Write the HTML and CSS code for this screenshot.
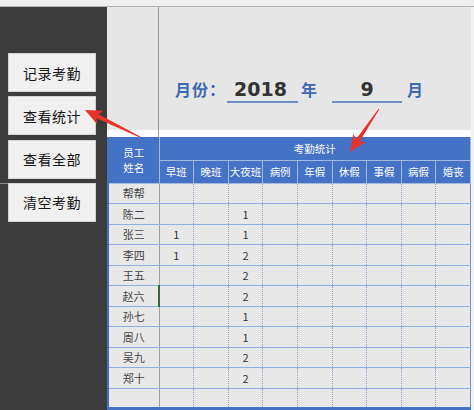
FILE: index.html
```html
<!DOCTYPE html>
<html lang="zh-CN">
<head>
<meta charset="utf-8">
<title>考勤统计</title>
<link rel="stylesheet" href="styles.css">
</head>
<body>
<div class="screen">
  <div class="topbar"></div>
  <div class="main">
    <aside class="panel">
      <button class="btn">记录考勤</button>
      <button class="btn">查看统计</button>
      <button class="btn">查看全部</button>
      <button class="btn">清空考勤</button>
      <span class="grid-line"></span>
    </aside>
    <section class="sheet">
      <div class="head">
        <div class="head-left"></div>
        <div class="head-right">
          <span class="label">月份：</span>
          <span class="field field-year">2018</span>
          <span class="label label-year">年</span>
          <span class="field field-month">9</span>
          <span class="label label-month">月</span>
        </div>
      </div>
      <table class="grid">
        <colgroup>
          <col class="col-name">
          <col><col><col><col><col><col><col><col><col>
        </colgroup>
        <thead>
          <tr class="hrow">
            <th rowspan="2" class="th-name">员工<br>姓名</th>
            <th colspan="9">考勤统计</th>
          </tr>
          <tr class="hrow">
            <th>早班</th><th>晚班</th><th>大夜班</th><th>病例</th><th>年假</th><th>休假</th><th>事假</th><th>病假</th><th>婚丧</th>
          </tr>
        </thead>
        <tbody>
          <tr><td class="name">帮帮</td><td></td><td></td><td></td><td></td><td></td><td></td><td></td><td></td><td></td></tr>
          <tr><td class="name">陈二</td><td></td><td></td><td>1</td><td></td><td></td><td></td><td></td><td></td><td></td></tr>
          <tr><td class="name">张三</td><td>1</td><td></td><td>1</td><td></td><td></td><td></td><td></td><td></td><td></td></tr>
          <tr><td class="name">李四</td><td>1</td><td></td><td>2</td><td></td><td></td><td></td><td></td><td></td><td></td></tr>
          <tr><td class="name">王五</td><td></td><td></td><td>2</td><td></td><td></td><td></td><td></td><td></td><td></td></tr>
          <tr><td class="name active">赵六</td><td></td><td></td><td>2</td><td></td><td></td><td></td><td></td><td></td><td></td></tr>
          <tr><td class="name">孙七</td><td></td><td></td><td>1</td><td></td><td></td><td></td><td></td><td></td><td></td></tr>
          <tr><td class="name">周八</td><td></td><td></td><td>1</td><td></td><td></td><td></td><td></td><td></td><td></td></tr>
          <tr><td class="name">吴九</td><td></td><td></td><td>2</td><td></td><td></td><td></td><td></td><td></td><td></td></tr>
          <tr><td class="name">郑十</td><td></td><td></td><td>2</td><td></td><td></td><td></td><td></td><td></td><td></td></tr>
          <tr><td class="name"></td><td></td><td></td><td></td><td></td><td></td><td></td><td></td><td></td><td></td></tr>
        </tbody>
      </table>
    </section>
    <div class="edge"></div>
  </div>
  <svg class="arrows" width="474" height="410" viewBox="0 0 474 410">
    <polygon class="arrow" points="85,110 103.6,110.8 98.6,114.2 140.2,136.6 139.8,137.4 96.6,118.2 97,124.2"/>
    <polygon class="arrow" points="350,152 353.3,133.7 356,139.2 378.6,108.7 379.4,109.3 359.6,141.6 365.7,142.1"/>
  </svg>
</div>
</body>
</html>
```

FILE: styles.css
```css
* { box-sizing: border-box; }

body {
  margin: 0;
  width: 474px;
  height: 410px;
  overflow: hidden;
  background: #e6e6e6;
  font-family: "Noto Sans CJK SC", "Noto Sans", sans-serif;
}

.screen {
  position: relative;
  width: 474px;
  height: 410px;
  display: flex;
  flex-direction: column;
}

.topbar {
  height: 7px;
  background: #efefef;
  border-bottom: 1px solid #b0b0b0;
}

.main {
  flex: 1;
  display: flex;
}

.panel {
  position: relative;
  width: 107px;
  background: #3c3c3c;
  padding: 46px 0 0 8px;
  display: flex;
  flex-direction: column;
  gap: 4.33px;
}

.btn {
  width: 88px;
  height: 39px;
  margin: 0;
  padding: 0;
  background: #f0f0f0;
  border: 1px solid #d4d4d4;
  border-radius: 0;
  font-family: "Noto Sans CJK SC", "Noto Sans", sans-serif;
  font-size: 14px;
  color: #151515;
  letter-spacing: 0.5px;
}

.grid-line {
  position: absolute;
  left: 0;
  top: 176px;
  width: 8px;
  height: 1px;
  background: #8c8c8c;
}

.sheet {
  width: 364px;
  display: flex;
  flex-direction: column;
}

.edge {
  flex: 1;
  background: #f3f3f3;
}

.head {
  height: 130px;
  display: flex;
}

.head-left {
  width: 52px;
  border-right: 1px solid #9c9c9c;
  background: linear-gradient(#e6e6e6 0 123px, #ffffff 123px);
}

.head-right {
  flex: 1;
  display: flex;
  align-items: flex-end;
  padding: 0 0 34px 16px;
  background: linear-gradient(#e6e6e6 0 123px, #ffffff 123px);
}

.label {
  font-size: 16px;
  font-weight: bold;
  color: #3d68b2;
  line-height: 24px;
  padding-bottom: 2px;
  letter-spacing: 1px;
}

.field {
  display: inline-block;
  text-align: center;
  font-family: "DejaVu Sans", "Liberation Sans", sans-serif;
  font-weight: bold;
  font-size: 19px;
  color: #333333;
  line-height: 24px;
  border-bottom: 2px solid #6f8dc0;
}

.field-year {
  width: 71px;
  margin-left: 1px;
  padding-right: 4px;
}

.label-year { margin-left: 3px; }

.field-month {
  width: 70px;
  margin-left: 14px;
}

.label-month { margin-left: 5px; }

.grid {
  width: 364px;
  border-collapse: collapse;
  table-layout: fixed;
  border-left: 2px solid #4472c4;
  border-right: 1px solid #6f92cc;
  border-bottom: 3px solid #4472c4;
}

.col-name { width: 51px; }

.hrow { height: 23px; }

.grid th {
  padding: 0;
  background: #4472c4;
  color: #ffffff;
  font-size: 10.5px;
  font-weight: normal;
  line-height: 15px;
  border: 1px solid #a3b9e2;
  white-space: nowrap;
  overflow: hidden;
}

.grid thead tr:first-child th { border-top: none; }

.grid tbody tr { height: 20.5px; }

.grid td {
  padding: 0;
  background: #e8e8e8;
  font-size: 11px;
  line-height: 14px;
  color: #333333;
  text-align: center;
  border-bottom: 1px solid #8db0de;
  border-left: 1px dotted #8ca6cc;
}

.grid td.name {
  color: #444444;
  border-left: none;
  border-right: 1px solid #9f9f9f;
}

.grid td.name.active {
  border-right: 2px solid #2f6b3f;
}

.arrows {
  position: absolute;
  left: 0;
  top: 0;
  pointer-events: none;
}

.arrow { fill: #e6332c; }
```
